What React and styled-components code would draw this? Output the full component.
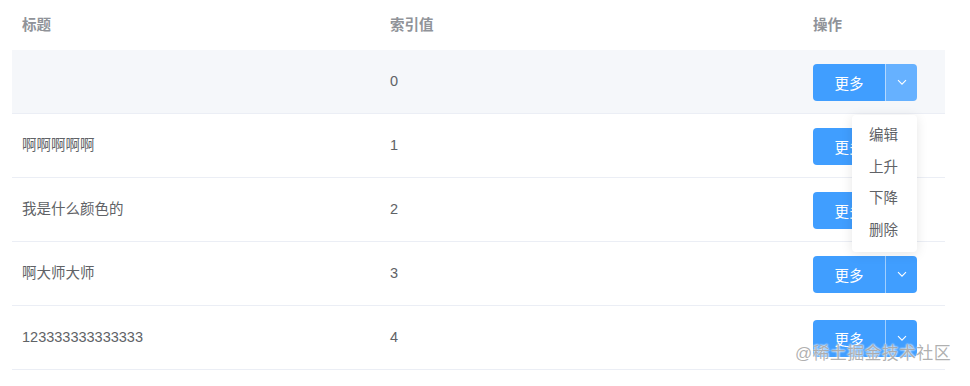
import React from 'react';
import styled, { createGlobalStyle } from 'styled-components';

const Global = createGlobalStyle`
  body {
    margin: 0;
    background: #fff;
    font-family: "Liberation Sans", "Noto Sans CJK SC", sans-serif;
  }
`

const Page = styled.div`
  position: relative;
  width: 970px;
  height: 386px;
  padding: 0 25px 0 12px;
  box-sizing: border-box;
  overflow: hidden;
`

const Row = styled.div`
  display: grid;
  grid-template-columns: 368px 423px 1fr;
  height: ${p => (p.head ? 50 : 64)}px;
  align-items: center;
  border-bottom: ${p => (p.head ? 'none' : '1px solid #ebeef5')};
  box-sizing: border-box;
  background: ${p => (p.hover ? '#f5f7fa' : '#fff')};
`

const Cell = styled.div`
  padding-left: 10px;
  font-size: 14.5px;
  color: ${p => (p.head ? '#909399' : '#606266')};
  font-weight: ${p => (p.head ? 'bold' : 'normal')};
  line-height: 23px;
`

const Split = styled.div`
  display: inline-flex;
  height: 37px;
  margin-top: 1px;
`

const MainBtn = styled.button`
  width: 72px;
  height: 37px;
  border: none;
  border-radius: 4px 0 0 4px;
  background: #409eff;
  color: #fff;
  font-size: 14.5px;
  font-family: inherit;
  padding: 0;
`

const Caret = styled.button`
  width: 32px;
  height: 37px;
  border: none;
  border-left: 1px solid rgba(255, 255, 255, 0.5);
  border-radius: 0 4px 4px 0;
  background: ${p => (p.active ? '#66b1ff' : '#409eff')};
  display: flex;
  align-items: center;
  justify-content: center;
  padding: 0;
`

const Menu = styled.ul`
  position: absolute;
  left: 852px;
  top: 115px;
  width: 65px;
  margin: 0;
  padding: 5px 0 6px;
  list-style: none;
  background: #fff;
  border-radius: 4px;
  box-shadow: 0 2px 12px rgba(0, 0, 0, 0.1);
  z-index: 2;
`

const MenuItem = styled.li`
  height: 31.5px;
  line-height: 31.5px;
  padding-left: 17px;
  font-size: 14.5px;
  color: #606266;
`

const Watermark = styled.div`
  position: absolute;
  left: 795px;
  top: 344px;
  font-size: 17px;
  line-height: 20px;
  color: rgba(150, 150, 150, 0.75);
  text-shadow: 0 0 2px #fff, 0 0 2px #fff;
  letter-spacing: 0.3px;
  z-index: 3;
`

const rows = [
  { title: '', idx: 0 },
  { title: '啊啊啊啊啊', idx: 1 },
  { title: '我是什么颜色的', idx: 2 },
  { title: '啊大师大师', idx: 3 },
  { title: '123333333333333', idx: 4 },
]

function Chevron() {
  return (
    <svg width="12" height="12" viewBox="0 0 12 12">
      <path d="M2 4.2 L6 8.2 L10 4.2" fill="none" stroke="#fff" strokeWidth="1.1" />
    </svg>
  )
}

export default function App() {
  return (
    <Page>
      <Global />
      <Row head>
        <Cell head>标题</Cell>
        <Cell head>索引值</Cell>
        <Cell head>操作</Cell>
      </Row>
      {rows.map((r, i) => (
        <Row key={r.idx} hover={i === 0}>
          <Cell>{r.title}</Cell>
          <Cell>{r.idx}</Cell>
          <Cell>
            <Split>
              <MainBtn>更多</MainBtn>
              <Caret active={i === 0}><Chevron /></Caret>
            </Split>
          </Cell>
        </Row>
      ))}
      <Menu>
        <MenuItem>编辑</MenuItem>
        <MenuItem>上升</MenuItem>
        <MenuItem>下降</MenuItem>
        <MenuItem>删除</MenuItem>
      </Menu>
      <Watermark>@稀土掘金技术社区</Watermark>
    </Page>
  );
}
